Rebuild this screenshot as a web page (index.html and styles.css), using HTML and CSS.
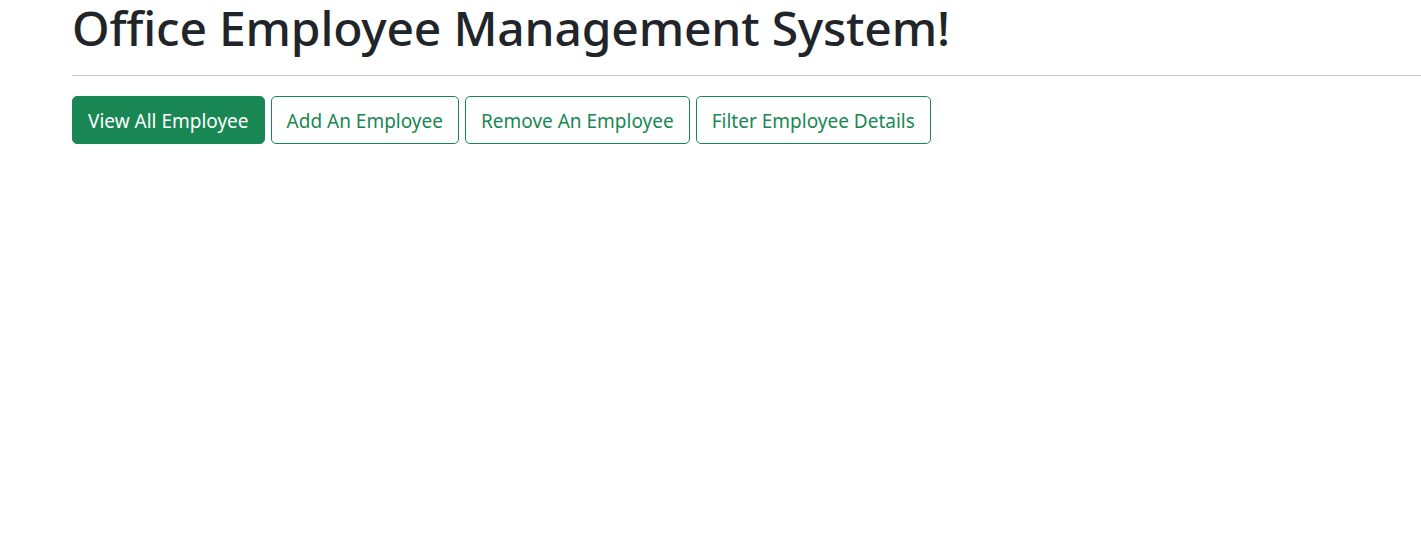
FILE: index.html
```html
<!DOCTYPE html>
<html>
<head>
<meta charset="utf-8">
<link rel="stylesheet" href="styles.css">
</head>
<body>
<div class="page">
  <h1 class="title">Office Employee Management System!</h1>
  <hr class="rule">
  <div class="actions">
    <button class="btn btn-solid">View All Employee</button>
    <button class="btn btn-outline">Add An Employee</button>
    <button class="btn btn-outline">Remove An Employee</button>
    <button class="btn btn-outline">Filter Employee Details</button>
  </div>
</div>
</body>
</html>
```
FILE: styles.css
```css
html, body {
  margin: 0;
  padding: 0;
  background: #fff;
}
body {
  font-family: "Noto Sans", "Open Sans", sans-serif;
  color: #212529;
}
.page {
  padding-left: 72px;
}
.title {
  margin: 0;
  font-size: 48px;
  font-weight: 500;
  line-height: 56px;
  letter-spacing: -0.2px;
}
.rule {
  margin: 19px 0 20px 0;
  border: 0;
  border-top: 1px solid #c8c9ca;
  height: 0;
}
.actions {
  display: flex;
  gap: 6px;
}
.btn {
  font-family: inherit;
  font-size: 19px;
  line-height: 28px;
  padding: 10px 15px 8px;
  border-radius: 5px;
  border: 1px solid #198754;
  cursor: pointer;
}
.btn-solid {
  background: #198754;
  color: #fff;
}
.btn-outline {
  background: #fff;
  color: #198754;
}
```
